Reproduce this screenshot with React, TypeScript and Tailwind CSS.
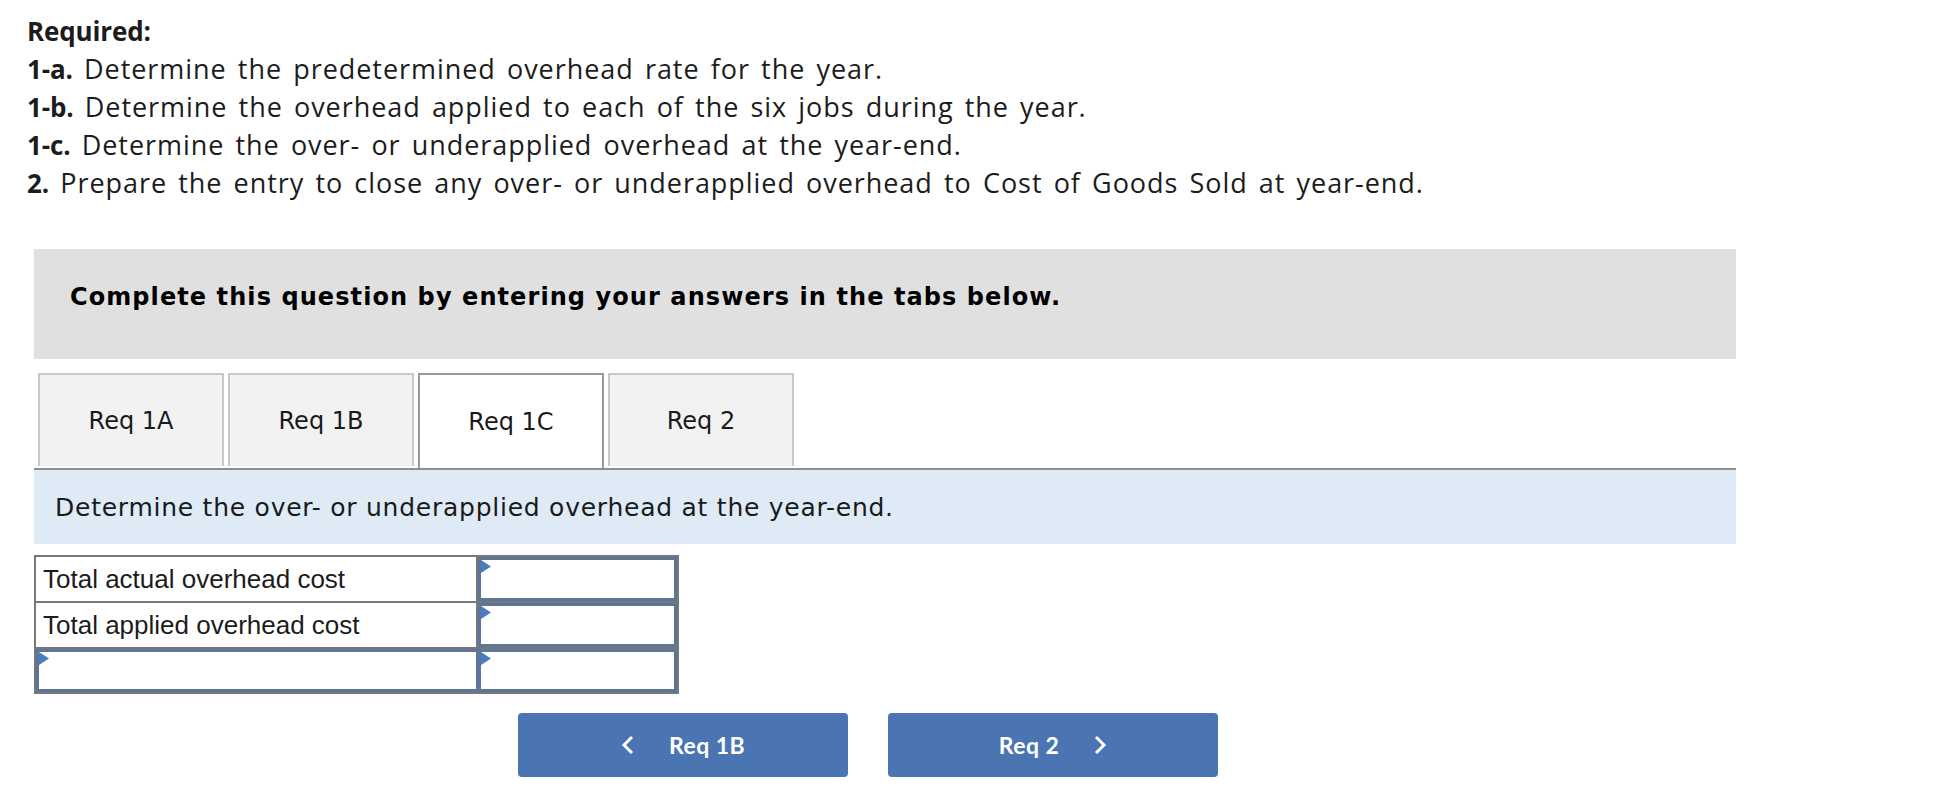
import React from "react";

const Tab = ({ label, active }: { label: string; active?: boolean }) => (
  <div
    className={
      active
        ? "relative z-10 flex h-[95px] w-[186px] items-center justify-center border-2 border-b-0 border-[#9a9a9a] bg-white"
        : "flex h-[93px] w-[186px] items-center justify-center border-2 border-b-0 border-[#c9c9c9] bg-[#f2f2f2]"
    }
  >
    <span className="text-[24px] leading-none text-[#1a1a1a] [font-family:'DejaVu_Sans',Verdana,sans-serif]">
      {label}
    </span>
  </div>
);

const Marker = () => (
  <svg
    className="absolute left-0 top-0"
    width="10"
    height="13"
    viewBox="0 0 10 13"
  >
    <polygon points="0,0 10,6.5 0,13" fill="#4a7cc4" />
  </svg>
);

const InputCell = ({ className }: { className: string }) => (
  <div className={"relative border-[3px] border-[#5d7599] bg-white " + className}>
    <Marker />
  </div>
);

export default function App() {
  return (
    <div className="h-[799px] w-full bg-white text-[#1c1c1c]">
      <div className="pl-[27px] pt-[12px] text-[27px] leading-[38px] tracking-[0.035em] [word-spacing:0.12em] [font-family:'Open_Sans',Lato,sans-serif]">
        <div className="text-[26px] font-bold tracking-[-0.005em] [word-spacing:0]">Required:</div>
        <div>
          <span className="text-[26px] font-bold tracking-[-0.005em]">1-a.</span> Determine the predetermined overhead rate for the year.
        </div>
        <div>
          <span className="text-[26px] font-bold tracking-[-0.005em]">1-b.</span> Determine the overhead applied to each of the six jobs during the year.
        </div>
        <div>
          <span className="text-[26px] font-bold tracking-[-0.005em]">1-c.</span> Determine the over- or underapplied overhead at the year-end.
        </div>
        <div>
          <span className="text-[26px] font-bold tracking-[-0.005em]">2.</span> Prepare the entry to close any over- or underapplied overhead to Cost of Goods Sold at year-end.
        </div>
      </div>

      <div className="ml-[34px] mt-[47px] w-[1702px]">
        <div className="h-[110px] bg-[#e0e0e0] pl-[36px] pt-[33px]">
          <div className="text-[24px] font-bold leading-[30px] tracking-[0.045em] text-black [font-family:'DejaVu_Sans',Verdana,sans-serif]">
            Complete this question by entering your answers in the tabs below.
          </div>
        </div>

        <div className="mt-[14px] flex items-start gap-[4px] pl-[4px]">
          <Tab label="Req 1A" />
          <Tab label="Req 1B" />
          <Tab label="Req 1C" active />
          <Tab label="Req 2" />
        </div>
        <div className="h-[2px] bg-[#8e8e8e]" />
        <div className="flex h-[74px] items-center bg-[#deebf7] pl-[21px]">
          <span className="text-[25px] leading-none tracking-[0.03em] text-[#1a1a1a] [font-family:'DejaVu_Sans',Verdana,sans-serif]">
            Determine the over- or underapplied overhead at the year-end.
          </span>
        </div>

        <div className="mt-[11px] w-[645px] border-2 border-[#777777] [font-family:'Liberation_Sans',Arial,sans-serif]">
          <div className="flex h-[46px] border-b-2 border-[#777777]">
            <div className="flex w-[442px] items-center border-r-2 border-[#777777] pl-[7px] text-[26px] text-[#1c1c1c]">
              Total actual overhead cost
            </div>
            <InputCell className="flex-1" />
          </div>
          <div className="flex h-[46px] border-b-2 border-[#777777]">
            <div className="flex w-[442px] items-center border-r-2 border-[#777777] pl-[7px] text-[26px] text-[#1c1c1c]">
              Total applied overhead cost
            </div>
            <InputCell className="flex-1" />
          </div>
          <div className="flex h-[43px]">
            <InputCell className="w-[442px] border-r-2" />
            <InputCell className="flex-1" />
          </div>
        </div>
      </div>

      <div className="ml-[518px] mt-[19px] flex gap-[40px] [font-family:Lato,sans-serif]">
        <div className="flex h-[64px] w-[330px] items-center justify-center gap-[34px] rounded-[4px] bg-[#4a75b2] text-white">
          <svg width="14" height="20" viewBox="0 0 14 20">
            <polyline points="11,2 3,10 11,18" fill="none" stroke="white" strokeWidth="3" />
          </svg>
          <span className="text-[23px] font-bold tracking-[0.02em]">Req 1B</span>
        </div>
        <div className="flex h-[64px] w-[330px] items-center justify-center gap-[34px] rounded-[4px] bg-[#4a75b2] text-white">
          <span className="text-[23px] font-bold tracking-[0.02em]">Req 2</span>
          <svg width="14" height="20" viewBox="0 0 14 20">
            <polyline points="3,2 11,10 3,18" fill="none" stroke="white" strokeWidth="3" />
          </svg>
        </div>
      </div>
    </div>
  );
}
